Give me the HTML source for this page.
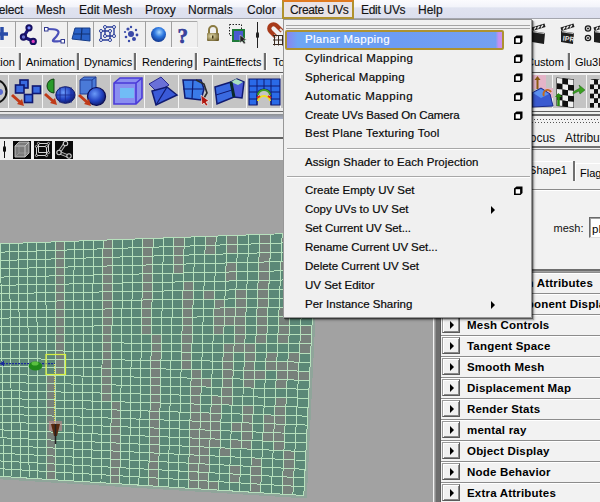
<!DOCTYPE html>
<html><head><meta charset="utf-8">
<style>
*{margin:0;padding:0;box-sizing:border-box}
html,body{width:600px;height:502px;overflow:hidden;background:#f0f0f0;font-family:"Liberation Sans",sans-serif;position:relative}
.a{position:absolute}
svg{position:absolute;overflow:visible}
#menubar{left:0;top:0;width:600px;height:19px;background:linear-gradient(#fbfbfe 0,#f3f4fa 6.5px,#e0e3f0 8px,#dcdfee 18px,#a4a6ae 18px)}
#menubar span{position:absolute;top:3px;font-size:12px;color:#111;-webkit-text-stroke:0.15px #222;white-space:nowrap}
#tb1{left:0;top:19px;width:600px;height:29px;background:#f0f0f0;border-top:1px solid #f6f6f6}
.vl{position:absolute;width:1px;background:#a0a0a0}
.hl{position:absolute;height:1px;background:#a0a0a0}
#tabs{left:0;top:48px;width:600px;height:25px;background:#f0f0f0;border-bottom:1px solid #5e5e5e}
#tabs span{position:absolute;top:7.5px;font-size:11px;color:#000;white-space:nowrap}
.tsep{position:absolute;top:5px;width:4px;height:17px;background:#6e6e6e;border-left:1px solid #d6d6d6;border-right:1px solid #fff}
#shelf{left:0;top:73px;width:600px;height:38px;background:#f0f0f0}
#shelf .bg{position:absolute;top:2px;height:33px;background:#c4c4c4}
.ssep{position:absolute;top:2px;width:1px;height:33px;background:#f4f4f4}
#bar2{left:0;top:111px;width:600px;height:8px;background:linear-gradient(#6c6c6c 0,#6c6c6c 1px,#e6e6e6 1px,#e6e6e6 3px,#8e9194 3px,#a7aec4 8px)}
#bar3{left:0;top:119px;width:441px;height:20px;background:#efefef;border-bottom:2px solid #616161}
#ptb{left:0;top:139px;width:433px;height:21px;background:#f0f0f0}
#vp{left:0;top:160px;width:433px;height:342px;background:#a2a2a2;overflow:hidden}
#vdiv{left:433px;top:139px;width:8px;height:363px;background:linear-gradient(90deg,#f4f4f4 0 1px,#acacac 1px 2px,#8c8c8c 2px 3px,#6e6e6e 3px 7px,#5a5a5a 7px 8px)}
#ae{left:441px;top:111px;width:159px;height:391px;background:linear-gradient(#5e5e5e 0,#5e5e5e 1px,#eef0ee 1px,#eef0ee 3px,#6a6a6a 3px,#6a6a6a 4.5px,#f2f2f2 4.5px)}
#menu{left:283px;top:19px;width:249px;height:299px;background:#f0f0f0;border:1px solid #979797;box-shadow:1px 1px 0 rgba(0,0,0,.45),2px 2px 1px rgba(0,0,0,.25),3px 3px 2px rgba(0,0,0,.12)}
#menu .it{position:absolute;left:21px;font-size:11.5px;color:#000;-webkit-text-stroke:0.2px #222;white-space:nowrap}
#menu .sep{position:absolute;left:3px;width:243px;height:2px;border-top:1px solid #a8a8a8;border-bottom:1px solid #fff}
.arr{position:absolute;width:0;height:0;border-top:4px solid transparent;border-bottom:4px solid transparent;border-left:4.5px solid #000}
.row{position:absolute;left:0;width:159px;height:21px;border-top:1px solid #8c8c8c;box-shadow:inset 0 1px 0 #fff}
.row .b{position:absolute;left:1px;top:1px;width:18px;height:17px;background:#f0f0f0;border:1px solid;border-color:#9a9a9a #5a5a5a #5a5a5a #9a9a9a;box-shadow:inset 1px 1px 0 #fff,inset -1px -1px 0 #8a8a8a}
.row .b:after{content:"";position:absolute;left:7px;top:4px;border-top:4px solid transparent;border-bottom:4px solid transparent;border-left:4px solid #000}
.row span{position:absolute;left:26px;top:4px;font-size:11.5px;letter-spacing:0.2px;font-weight:bold;color:#000;white-space:nowrap}
</style></head><body>
<!-- MENUBAR -->
<div id="menubar" class="a">
<span style="left:-9px;letter-spacing:-0.2px">Select</span>
<span style="left:36px">Mesh</span>
<span style="left:79px">Edit Mesh</span>
<span style="left:145px">Proxy</span>
<span style="left:188px">Normals</span>
<span style="left:247px">Color</span>
<span style="left:361px;letter-spacing:-0.3px">Edit UVs</span>
<span style="left:418px">Help</span>
</div>
<!-- TOOLBAR 1 -->
<div id="tb1" class="a">
<div class="hl" style="left:0;top:1px;width:198px;background:#a8a8a8"></div>
<div class="hl" style="left:0;top:27px;width:198px;background:#fafafa"></div>
<div class="vl" style="left:15px;top:1px;height:26px"></div>
<div class="vl" style="left:41px;top:1px;height:26px"></div>
<div class="vl" style="left:67px;top:1px;height:26px"></div>
<div class="vl" style="left:93px;top:1px;height:26px"></div>
<div class="vl" style="left:119px;top:1px;height:26px"></div>
<div class="vl" style="left:145px;top:1px;height:26px"></div>
<div class="vl" style="left:171px;top:1px;height:26px"></div>
<div class="vl" style="left:197px;top:1px;height:26px;background:#d8d8d8"></div>
<svg width="600" height="29" style="left:0;top:0">
 <!-- plus -->
 <path d="M-3 14h11M2 7v13" stroke="#2a4ca8" stroke-width="3.5"/>
 <!-- joints -->
 <path d="M29 8L23.5 17L33 21" stroke="#1a1278" stroke-width="3.2" fill="none" stroke-linejoin="round"/>
 <circle cx="29" cy="7.8" r="2.6" fill="#7a8aff" stroke="#140e60" stroke-width="2"/>
 <circle cx="23.5" cy="17" r="2.7" fill="#6a70d0" stroke="#140e60" stroke-width="2"/>
 <circle cx="33.2" cy="21.4" r="2.7" fill="#e040c0" stroke="#140e60" stroke-width="2"/>
 <!-- curve -->
 <path d="M47 9C56 9 60 10 58 14C56 18 52 20 53 21C55 22 59 21 62 21" stroke="#4a50b8" stroke-width="2.2" fill="none"/>
 <rect x="44.5" y="7.5" width="3.5" height="3.5" fill="#fff" stroke="#303890" stroke-width="1"/>
 <rect x="61" y="19.5" width="3.5" height="3.5" fill="#fff" stroke="#303890" stroke-width="1"/>
 <!-- poly plane -->
 <path d="M75 8L90 8L90 21L72 19Z" fill="#2a62c8" stroke="#163c88" stroke-width="1"/>
 <path d="M82 8L81 20M74 14L90 14" stroke="#123070" stroke-width="1.2"/>
 <!-- lattice -->
 <path d="M101 11h9v9h-9zM105 7h9v9h-9z" fill="none" stroke="#283c98" stroke-width="1.4"/>
 <g fill="#fff" stroke="#283c98" stroke-width="1"><circle cx="101" cy="11" r="1.5"/><circle cx="110" cy="11" r="1.5"/><circle cx="101" cy="20" r="1.5"/><circle cx="110" cy="20" r="1.5"/><circle cx="105" cy="7" r="1.5"/><circle cx="114" cy="7" r="1.5"/><circle cx="114" cy="16" r="1.5"/><circle cx="105" cy="16" r="1.5"/></g>
 <!-- particles -->
 <defs><filter id="blr" x="-50%" y="-50%" width="200%" height="200%"><feGaussianBlur stdDeviation=".7"/></filter></defs>
 <g fill="#3a4aa8" filter="url(#blr)"><circle cx="131" cy="14" r="3"/><circle cx="128" cy="9" r="1.6"/><circle cx="134" cy="19" r="2"/><circle cx="126" cy="17" r="1.3"/><circle cx="136" cy="10" r="1.2"/><circle cx="131" cy="7" r="1.2"/><circle cx="129" cy="21" r="1.2"/><circle cx="137" cy="15" r="1.4"/><circle cx="125" cy="12" r="1.1"/></g>
 <!-- sphere -->
 <defs><radialGradient id="sg" cx=".55" cy=".35" r=".7"><stop offset="0" stop-color="#a8d8ff"/><stop offset=".45" stop-color="#2e78e0"/><stop offset="1" stop-color="#0a2a80"/></radialGradient>
 <radialGradient id="lk" cx=".4" cy=".4" r=".7"><stop offset="0" stop-color="#e8e0b0"/><stop offset="1" stop-color="#6a5a28"/></radialGradient></defs>
 <circle cx="158.5" cy="14.5" r="7.5" fill="url(#sg)"/>
 <!-- ? -->
 <text x="177.5" y="23" font-family="Liberation Serif" font-weight="bold" font-size="21" fill="#3a44a0" stroke="#2a3490" stroke-width=".6">?</text>
 <!-- lock -->
 <path d="M209 13v-3a4 4 0 0 1 8 0v3" stroke="#8a7a40" stroke-width="2" fill="none"/>
 <rect x="207" y="13" width="12" height="8" rx="1" fill="url(#lk)"/>
 <rect x="212" y="15.5" width="1.5" height="3" fill="#3a3010"/>
 <!-- select -->
 <rect x="229.5" y="4.5" width="12" height="11" fill="none" stroke="#222" stroke-width="1" stroke-dasharray="1.5 1.5"/>
 <rect x="232" y="9" width="13" height="13" fill="#1f7a3a"/>
 <rect x="234" y="11" width="9" height="9" fill="#4a5ad0"/>
 <path d="M240 15l0 8l2-2l2 3l1.5-1l-2-3l3 0z" fill="#222" stroke="#ddd" stroke-width=".5"/>
 <!-- separator -->
 <path d="M257.5 2v26" stroke="#222" stroke-width="1"/>
 <rect x="256" y="12" width="3" height="6" rx="1.5" fill="#222"/>
 <!-- magnet -->
 <path d="M276 17L270.5 11.5a4.2 4.2 0 0 1 6-6L282 11" stroke="#a83a1a" stroke-width="4.2" fill="none"/>
 <path d="M276 17l-2-2M282 11l-2-2" stroke="#e8e0d8" stroke-width="2"/>
 <path d="M273 15.5h11M273 20h11M273 24.5h11M274.5 15v10.5M278.5 15v10.5M282.5 15v10.5" stroke="#3a2a20" stroke-width="1"/>
</svg>
<!-- right side clapboards -->
<svg width="70" height="29" style="left:530px;top:0" viewBox="530 20 70 29">
 <defs><g id="clap"><path d="M0 7L13 9L12 20L0 18Z" fill="#1e1e1e"/><path d="M-0.5 3.5L12.5 -0.5L13.5 3L0.5 7Z" fill="#1e1e1e"/><path d="M2 5.5l2-2.5M5.5 4.5l2-2.5M9 3.5l2-2.5" stroke="#e8e8e8" stroke-width="1.3"/><path d="M1 7.8L12.5 9.6" stroke="#e8e8e8" stroke-width=".8"/></g></defs>
 <use href="#clap" x="532" y="24"/>
 <use href="#clap" x="561" y="24"/>
 <text x="563" y="41" font-size="7" font-weight="bold" fill="#e8e8e8" transform="rotate(8 567 38)">IPR</text>
 <circle cx="588" cy="28.5" r="2.6" fill="none" stroke="#1a1a1a" stroke-width="1.4"/><circle cx="588" cy="28.5" r="1" fill="#1a1a1a"/>
 <circle cx="588" cy="38" r="2.6" fill="none" stroke="#1a1a1a" stroke-width="1.4"/><circle cx="588" cy="38" r="1" fill="#1a1a1a"/>
 <use href="#clap" x="594" y="24"/>
</svg>
</div>
<!-- SHELF TABS -->
<div id="tabs" class="a">
<span style="left:-45px">Deformation</span>
<div class="tsep" style="left:18px"></div>
<span style="left:26px">Animation</span>
<div class="tsep" style="left:76px"></div>
<span style="left:84px">Dynamics</span>
<div class="tsep" style="left:133px"></div>
<span style="left:142px">Rendering</span>
<div class="tsep" style="left:194px"></div>
<span style="left:203px">PaintEffects</span>
<div class="tsep" style="left:263px"></div>
<span style="left:273px">Toon</span>
<span style="left:526px">Custom</span>
<div class="tsep" style="left:567px"></div>
<span style="left:575px">Glu3D</span>
</div>
<!-- SHELF -->
<div id="shelf" class="a">
<div class="bg" style="left:0;width:283px"></div>
<div class="bg" style="left:531px;width:69px"></div>
<div class="ssep" style="left:8px"></div>
<div class="ssep" style="left:42px"></div>
<div class="ssep" style="left:76px"></div>
<div class="ssep" style="left:110px"></div>
<div class="ssep" style="left:144px"></div>
<div class="ssep" style="left:178px"></div>
<div class="ssep" style="left:212px"></div>
<div class="ssep" style="left:246px"></div>
<div class="ssep" style="left:280px"></div>
<div class="ssep" style="left:552px"></div>
<div class="ssep" style="left:586px"></div>
<svg width="600" height="38" style="left:0;top:0" viewBox="0 73 600 38">
<defs>
<linearGradient id="bl" x1="0" y1="0" x2="1" y2="1"><stop offset="0" stop-color="#5a8cf0"/><stop offset="1" stop-color="#2a48c0"/></linearGradient>
<radialGradient id="bs" cx=".4" cy=".35" r=".7"><stop offset="0" stop-color="#6a9af8"/><stop offset=".6" stop-color="#2040c0"/><stop offset="1" stop-color="#101860"/></radialGradient>
<g id="rarr"><path d="M0 0L9 8" stroke="#c03a18" stroke-width="3"/><path d="M5 9L12 11L10 4Z" fill="#c03a18"/></g>
</defs>
<!-- icon0 -->
<circle cx="-5" cy="91.5" r="11.5" fill="#c8c8c8" stroke="#111" stroke-width="2"/><ellipse cx="-1" cy="92" rx="4" ry="3" fill="#5a6ad0"/>
<!-- icon1 -->
<g fill="#3a6ae0" stroke="#101870" stroke-width="1.6">
<rect x="20" y="80" width="8" height="8"/><rect x="15.5" y="85" width="8.5" height="8"/><rect x="32.5" y="86" width="8" height="7.5"/><rect x="24.5" y="94.5" width="8" height="8"/>
</g>
<use href="#rarr" x="12" y="95"/>
<!-- icon2 -->
<path d="M54 79A7 7 0 0 0 54 93Z" fill="#2a9a2a" stroke="#104010" stroke-width="1"/>
<ellipse cx="65.4" cy="95" rx="9.6" ry="8.3" fill="url(#bs)" stroke="#101868" stroke-width="1"/>
<path d="M60 87v16M65.4 86.7v16.6M71 87v16M56 95h19" stroke="#1a2a90" stroke-width=".8"/>
<use href="#rarr" x="45" y="94"/>
<!-- icon3 -->
<path d="M80 80l4-3h12v14l-4 3h-12z" fill="#4a7ad8" stroke="#203a90" stroke-width="1"/>
<path d="M80 80h12v14M92 80l4-3" stroke="#203a90" stroke-width="1" fill="none"/>
<circle cx="96.5" cy="96.5" r="9" fill="url(#bs)" stroke="#0a0a50" stroke-width="1.2"/>
<use href="#rarr" x="79" y="95"/>
<!-- icon4 -->
<path d="M114 83l6-5h22v20l-6 6h-22z" fill="#8a8ef0" stroke="#4a3ad8" stroke-width="1.6"/>
<path d="M114 83h22v21M136 83l6-5" stroke="#4a3ad8" stroke-width="1.6" fill="none"/>
<rect x="120" y="88" width="14" height="10" fill="#6ac8f8" opacity=".8"/>
<!-- icon5 -->
<path d="M149 84l12-7l8 8l-12 7z" fill="#6a70d8" stroke="#2a2a90" stroke-width="1"/>
<path d="M152 91l4 14l21-10l-10-8z" fill="#3a5ad8" stroke="#101a70" stroke-width="1.5"/>
<path d="M156 105l11-18" stroke="#101a70" stroke-width="1.2"/>
<!-- icon6 -->
<path d="M183 80h18l3 9l-3 11l-16 -2z" fill="#3a7ae8" stroke="#101a70" stroke-width="1.5"/>
<path d="M193 80l-1 19M183 89h20" stroke="#101a70" stroke-width="1.2"/>
<path d="M196 80l8 4l3 9l-3 5" stroke="#2a2a2a" stroke-width="1.6" fill="none"/>
<path d="M201 95l1 10l2-2l2 3l2-1l-2-3l3-1z" fill="#b01a10" stroke="#fff" stroke-width=".6"/>
<!-- icon7 -->
<path d="M215 87l16-5l3 15l-17 7z" fill="#3a6ae0" stroke="#101a70" stroke-width="1.5"/>
<path d="M231 82l6-3l7 3l-2 16l-8 -1z" fill="#4a5ad8" stroke="#101a70" stroke-width="1.5"/>
<path d="M231 82l5 -3l7 3l-5 3z" fill="#a8e0c0"/>
<path d="M231 82l3 15" stroke="#0a2a2a" stroke-width="3"/>
<path d="M216 95l16-5" stroke="#101a70" stroke-width="1"/>
<!-- icon8 -->
<path d="M249 79h31v26h-9v-10a7 6 0 0 0 -14 0v10h-8z" fill="#2a6ae8" stroke="#101a70" stroke-width="1.2"/>
<path d="M249 86h31M249 92h8M271 92h9M249 99h8M271 99h9M257 79v26M264 79v12M271 79v26" stroke="#101a70" stroke-width="1"/>
<path d="M257 101a7 6 0 0 1 14 0h-2a5 4 0 0 0 -10 0z" fill="#f0e020"/>
<path d="M258 95a6 5 0 0 1 12 0" stroke="#40a020" stroke-width="2" fill="none"/>
<path d="M257 98l3-2M271 98l-3-2" stroke="#e03010" stroke-width="2"/>
<!-- right shelf -->
<rect x="532" y="75" width="14" height="14" fill="#e4b4c8"/>
<rect x="545" y="88" width="8" height="10" fill="#e4b4c8"/>
<path d="M537.5 89v-10" stroke="#8a5a10" stroke-width="2"/><path d="M534.5 80l3-4l3 4z" fill="#8a5a10"/>
<path d="M532 93l9-5l9 6l3 12l-21 1z" fill="#3a5ad0" stroke="#1a2a8a" stroke-width="1"/>
<path d="M533 93l8-4l8 5l-8 4z" fill="#5a90f0"/>
<path d="M544 96a4 4 0 0 1 7 -4" stroke="#c06a20" stroke-width="2" fill="none"/>
<g transform="translate(557,78) skewY(6)"><rect x="-0.5" y="-0.5" width="17.5" height="28.5" fill="#111"/><rect x="0.0" y="0.0" width="5.5" height="5.5" fill="#f0f0f0"/><rect x="5.5" y="0.0" width="5.5" height="5.5" fill="#111"/><rect x="11.0" y="0.0" width="5.5" height="5.5" fill="#f0f0f0"/><rect x="0.0" y="5.5" width="5.5" height="5.5" fill="#111"/><rect x="5.5" y="5.5" width="5.5" height="5.5" fill="#f0f0f0"/><rect x="11.0" y="5.5" width="5.5" height="5.5" fill="#111"/><rect x="0.0" y="11.0" width="5.5" height="5.5" fill="#f0f0f0"/><rect x="5.5" y="11.0" width="5.5" height="5.5" fill="#111"/><rect x="11.0" y="11.0" width="5.5" height="5.5" fill="#f0f0f0"/><rect x="0.0" y="16.5" width="5.5" height="5.5" fill="#111"/><rect x="5.5" y="16.5" width="5.5" height="5.5" fill="#f0f0f0"/><rect x="11.0" y="16.5" width="5.5" height="5.5" fill="#111"/><rect x="0.0" y="22.0" width="5.5" height="5.5" fill="#f0f0f0"/><rect x="5.5" y="22.0" width="5.5" height="5.5" fill="#111"/><rect x="11.0" y="22.0" width="5.5" height="5.5" fill="#f0f0f0"/></g>
<path d="M573 92l7-4l-1-3l6 5l-5 4l-1-3l-6 3z" fill="#3aa020" stroke="#1a6010" stroke-width=".5"/>
<path d="M558.5 106v-11" stroke="#2a8a10" stroke-width="2.5"/><path d="M555 97l3.5-4l3.5 4z" fill="#2a8a10"/>
<g transform="translate(590,79)"><path d="M0 2a5 2 0 0 1 10 0v24a5 2 0 0 1 -10 0z" fill="#111"/><g transform="translate(0,1)"><rect x="0.0" y="0.0" width="4" height="4.6" fill="#e8e8e8"/><rect x="4.0" y="0.0" width="4" height="4.6" fill="#111"/><rect x="8.0" y="0.0" width="4" height="4.6" fill="#e8e8e8"/><rect x="0.0" y="4.6" width="4" height="4.6" fill="#111"/><rect x="4.0" y="4.6" width="4" height="4.6" fill="#e8e8e8"/><rect x="8.0" y="4.6" width="4" height="4.6" fill="#111"/><rect x="0.0" y="9.2" width="4" height="4.6" fill="#e8e8e8"/><rect x="4.0" y="9.2" width="4" height="4.6" fill="#111"/><rect x="8.0" y="9.2" width="4" height="4.6" fill="#e8e8e8"/><rect x="0.0" y="13.8" width="4" height="4.6" fill="#111"/><rect x="4.0" y="13.8" width="4" height="4.6" fill="#e8e8e8"/><rect x="8.0" y="13.8" width="4" height="4.6" fill="#111"/><rect x="0.0" y="18.4" width="4" height="4.6" fill="#e8e8e8"/><rect x="4.0" y="18.4" width="4" height="4.6" fill="#111"/><rect x="8.0" y="18.4" width="4" height="4.6" fill="#e8e8e8"/><rect x="0.0" y="23.0" width="4" height="4.6" fill="#111"/><rect x="4.0" y="23.0" width="4" height="4.6" fill="#e8e8e8"/><rect x="8.0" y="23.0" width="4" height="4.6" fill="#111"/></g></g>
</svg>
</div>
<div id="bar2" class="a"></div>
<div id="bar3" class="a"></div>
<div id="ptb" class="a">
<svg width="433" height="21" style="left:0;top:0" viewBox="0 139 433 21">
<path d="M4.5 141v17" stroke="#111" stroke-width="1"/><rect x="3" y="146" width="3" height="6" rx="1.5" fill="#111"/>
<rect x="13" y="141" width="18" height="18" fill="#0a0a0a"/>
<rect x="34" y="141" width="18" height="18" fill="#0a0a0a"/>
<rect x="55" y="141" width="18" height="18" fill="#0a0a0a"/>
<path d="M15 146l4-4h10v11l-4 4h-10z" fill="#7c7c7c"/>
<path d="M15 146h10v11M25 146l4-4M15 146l4-4h10v11l-4 4h-10z" stroke="#c8c8c8" stroke-width=".9" fill="none"/>
<path d="M19 142v11h10M19 153l-4 4" stroke="#a8a8a8" stroke-width=".6" fill="none"/>
<path d="M36.5 146.5h10v9h-10zM38.5 143.5h10v9h-10z" stroke="#d0d0d0" stroke-width="1" fill="none"/>
<g fill="#0a0a0a" stroke="#d8d8d8" stroke-width=".8"><circle cx="36.5" cy="146.5" r="1.1"/><circle cx="46.5" cy="146.5" r="1.1"/><circle cx="36.5" cy="155.5" r="1.1"/><circle cx="46.5" cy="155.5" r="1.1"/><circle cx="38.5" cy="143.5" r="1.1"/><circle cx="48.5" cy="143.5" r="1.1"/><circle cx="48.5" cy="152.5" r="1.1"/></g>
<path d="M65 143.5l-6 9l10 4" stroke="#bbb" stroke-width="3.4" fill="none" stroke-linecap="round" stroke-linejoin="round"/>
<path d="M65 143.5l-6 9l10 4" stroke="#222" stroke-width="1.4" fill="none" stroke-linecap="round" stroke-linejoin="round"/>
<circle cx="65.5" cy="143.5" r="2.2" fill="#111" stroke="#ccc" stroke-width="1.1"/>
<circle cx="59" cy="152.5" r="2.2" fill="#111" stroke="#ccc" stroke-width="1.1"/>
<circle cx="69" cy="156" r="2.2" fill="#111" stroke="#ccc" stroke-width="1.1"/>
</svg>
</div>
<div id="vp" class="a">
<svg width="433" height="342" style="left:0;top:0" shape-rendering="crispEdges">
<path d="M316.5 72.5 L319.5 72.5 L306.8 337.5 L303.8 335.5 Z M-10.0 315.7 L306.8 335.5 L306.8 338.5 L-10.0 318.7 Z" fill="#8fa59a"/>
<path d="M-10.0 84.2 L316.5 72.5 L303.8 335.5 L-10.0 315.7 Z" fill="#5b8877"/>
<path d="M46.3 215.2 55.3 215.3 55.3 223.5 46.3 223.3ZM46.3 223.3 55.3 223.5 55.3 231.6 46.3 231.3ZM46.3 231.3 55.3 231.6 55.4 239.6 46.3 239.4ZM46.3 239.4 55.4 239.6 55.4 247.7 46.4 247.4ZM46.4 247.4 55.4 247.7 55.4 255.7 46.4 255.4ZM46.4 255.4 55.4 255.7 55.4 263.7 46.4 263.4ZM46.4 263.4 55.4 263.7 55.4 271.7 46.4 271.3ZM46.4 271.3 55.4 271.7 55.4 279.7 46.5 279.3ZM46.5 279.3 55.4 279.7 55.4 287.6 46.5 287.2ZM46.5 287.2 55.4 287.6 55.4 295.5 46.5 295.1ZM46.5 295.1 55.4 295.5 55.4 303.4 46.5 302.9ZM46.5 302.9 55.4 303.4 55.4 311.3 46.6 310.8ZM46.6 310.8 55.4 311.3 55.4 319.1 46.6 318.6ZM55.2 82.2 64.6 81.8 64.6 90.3 55.2 90.7ZM55.2 90.7 64.6 90.3 64.6 98.9 55.2 99.1ZM55.2 99.1 64.6 98.9 64.6 107.3 55.2 107.6ZM55.2 107.6 64.6 107.3 64.5 115.8 55.2 116.0ZM55.2 116.0 64.5 115.8 64.5 124.2 55.2 124.4ZM55.2 124.4 64.5 124.2 64.5 132.7 55.2 132.8ZM55.2 132.8 64.5 132.7 64.5 141.0 55.2 141.2ZM55.2 141.2 64.5 141.0 64.5 149.4 55.2 149.5ZM55.2 149.5 64.5 149.4 64.5 157.8 55.3 157.8ZM55.3 157.8 64.5 157.8 64.5 166.1 55.3 166.1ZM55.3 166.1 64.5 166.1 64.5 174.4 55.3 174.4ZM55.3 174.4 64.5 174.4 64.5 182.7 55.3 182.6ZM55.3 182.6 64.5 182.7 64.5 190.9 55.3 190.8ZM55.3 190.8 64.5 190.9 64.5 199.1 55.3 199.0ZM55.3 199.0 64.5 199.1 64.5 207.3 55.3 207.2ZM55.3 207.2 64.5 207.3 64.5 215.5 55.3 215.3ZM103.1 80.4 112.9 80.0 112.8 88.7 103.0 89.1ZM103.0 89.1 112.8 88.7 112.8 97.4 102.9 97.7ZM102.9 97.7 112.8 97.4 112.7 106.1 102.9 106.3ZM102.9 106.3 112.7 106.1 112.6 114.7 102.8 114.9ZM102.8 114.9 112.6 114.7 112.5 123.3 102.7 123.5ZM102.7 123.5 112.5 123.3 112.4 131.9 102.6 132.0ZM102.6 132.0 112.4 131.9 112.3 140.5 102.6 140.6ZM102.6 140.6 112.3 140.5 112.2 149.0 102.5 149.1ZM102.5 149.1 112.2 149.0 112.1 157.5 102.4 157.6ZM102.4 157.6 112.1 157.5 112.0 166.0 102.4 166.0ZM102.4 166.0 112.0 166.0 111.9 174.5 102.3 174.4ZM102.3 174.4 111.9 174.5 111.8 182.9 102.2 182.9ZM102.2 182.9 111.8 182.9 111.8 191.3 102.1 191.2ZM102.1 191.2 111.8 191.3 111.7 199.7 102.1 199.6ZM102.1 199.6 111.7 199.7 111.6 208.1 102.0 207.9ZM102.0 207.9 111.6 208.1 111.5 216.4 101.9 216.2ZM101.9 216.2 111.5 216.4 111.4 224.8 101.8 224.5ZM101.8 224.5 111.4 224.8 111.3 233.1 101.8 232.8ZM101.8 232.8 111.3 233.1 111.2 241.3 101.7 241.0ZM111.2 241.3 120.8 241.6 120.7 249.9 111.1 249.6ZM111.1 249.6 120.7 249.9 120.6 258.2 111.1 257.8ZM111.1 257.8 120.6 258.2 120.5 266.4 111.0 266.0ZM111.0 266.0 120.5 266.4 120.4 274.6 110.9 274.2ZM110.9 274.2 120.4 274.6 120.3 282.8 110.8 282.3ZM110.8 282.3 120.3 282.8 120.2 291.0 110.7 290.5ZM110.7 290.5 120.2 291.0 120.1 299.1 110.6 298.6ZM110.6 298.6 120.1 299.1 120.0 307.2 110.5 306.7ZM110.5 306.7 120.0 307.2 119.9 315.3 110.4 314.7ZM110.4 314.7 119.9 315.3 119.8 323.4 110.4 322.8ZM143.0 78.9 153.2 78.5 153.0 87.4 142.8 87.7ZM142.8 87.7 153.0 87.4 152.9 96.2 142.7 96.5ZM142.7 96.5 152.9 96.2 152.7 105.0 142.6 105.3ZM142.6 105.3 152.7 105.0 152.5 113.8 142.4 114.0ZM142.4 114.0 152.5 113.8 152.4 122.5 142.3 122.7ZM142.3 122.7 152.4 122.5 152.2 131.3 142.1 131.4ZM142.1 131.4 152.2 131.3 152.0 140.0 142.0 140.1ZM142.0 140.1 152.0 140.0 151.9 148.6 141.8 148.7ZM141.8 148.7 151.9 148.6 151.7 157.3 141.7 157.3ZM141.7 157.3 151.7 157.3 151.6 165.9 141.6 165.9ZM141.6 165.9 151.6 165.9 151.4 174.5 141.4 174.5ZM151.4 174.5 161.5 174.5 161.3 183.2 151.2 183.1ZM151.2 183.1 161.3 183.2 161.1 191.8 151.1 191.7ZM151.1 191.7 161.1 191.8 161.0 200.3 150.9 200.2ZM150.9 200.2 161.0 200.3 160.8 208.9 150.8 208.7ZM150.8 208.7 160.8 208.9 160.6 217.4 150.6 217.2ZM150.6 217.2 160.6 217.4 160.4 225.9 150.5 225.7ZM150.5 225.7 160.4 225.9 160.3 234.4 150.3 234.1ZM150.3 234.1 160.3 234.4 160.1 242.8 150.1 242.5ZM150.1 242.5 160.1 242.8 159.9 251.2 150.0 250.9ZM150.0 250.9 159.9 251.2 159.7 259.6 149.8 259.3ZM149.8 259.3 159.7 259.6 159.6 268.0 149.7 267.6ZM149.7 267.6 159.6 268.0 159.4 276.3 149.5 275.9ZM149.5 275.9 159.4 276.3 159.2 284.7 149.4 284.2ZM149.4 284.2 159.2 284.7 159.1 293.0 149.2 292.5ZM149.2 292.5 159.1 293.0 158.9 301.2 149.1 300.7ZM149.1 300.7 158.9 301.2 158.7 309.5 148.9 308.9ZM148.9 308.9 158.7 309.5 158.6 317.7 148.8 317.1ZM148.8 317.1 158.6 317.7 158.4 325.9 148.6 325.3ZM173.8 77.8 184.3 77.4 184.1 86.3 173.6 86.7ZM173.6 86.7 184.1 86.3 183.8 95.3 173.4 95.6ZM173.4 95.6 183.8 95.3 183.6 104.2 173.2 104.5ZM173.2 104.5 183.6 104.2 183.4 113.1 173.0 113.3ZM183.2 121.9 193.6 121.7 193.4 130.6 183.0 130.8ZM183.0 130.8 193.4 130.6 193.2 139.5 182.8 139.6ZM182.8 139.6 193.2 139.5 192.9 148.3 182.5 148.4ZM182.5 148.4 192.9 148.3 192.7 157.1 182.3 157.1ZM182.3 157.1 192.7 157.1 192.5 165.9 182.1 165.9ZM182.1 165.9 192.5 165.9 192.2 174.6 181.9 174.6ZM181.9 174.6 192.2 174.6 192.0 183.3 181.7 183.3ZM181.7 183.3 192.0 183.3 191.8 192.0 181.5 191.9ZM181.5 191.9 191.8 192.0 191.5 200.7 181.3 200.6ZM181.3 200.6 191.5 200.7 191.3 209.4 181.1 209.2ZM191.3 209.4 201.7 209.5 201.4 218.2 191.1 218.0ZM191.1 218.0 201.4 218.2 201.2 226.8 190.9 226.6ZM190.9 226.6 201.2 226.8 200.9 235.4 190.6 235.2ZM190.6 235.2 200.9 235.4 200.7 244.0 190.4 243.7ZM190.4 243.7 200.7 244.0 200.4 252.6 190.2 252.2ZM190.2 252.2 200.4 252.6 200.2 261.1 190.0 260.7ZM190.0 260.7 200.2 261.1 200.0 269.6 189.7 269.2ZM189.7 269.2 200.0 269.6 199.7 278.1 189.5 277.7ZM189.5 277.7 199.7 278.1 199.5 286.6 189.3 286.1ZM189.3 286.1 199.5 286.6 199.2 295.0 189.1 294.5ZM189.1 294.5 199.2 295.0 199.0 303.4 188.8 302.9ZM188.8 302.9 199.0 303.4 198.8 311.8 188.6 311.2ZM188.6 311.2 198.8 311.8 198.5 320.2 188.4 319.6ZM188.4 319.6 198.5 320.2 198.3 328.5 188.2 327.9ZM205.4 76.6 216.2 76.2 215.9 85.3 205.2 85.6ZM205.2 85.6 215.9 85.3 215.6 94.3 204.9 94.6ZM203.9 130.4 214.5 130.3 214.2 139.2 203.7 139.3ZM201.4 218.2 211.8 218.4 211.6 227.1 201.2 226.8ZM200.4 252.6 210.8 252.9 210.5 261.5 200.2 261.1ZM200.2 261.1 210.5 261.5 210.3 270.1 200.0 269.6ZM200.0 269.6 210.3 270.1 210.0 278.6 199.7 278.1ZM199.7 278.1 210.0 278.6 209.7 287.1 199.5 286.6ZM199.5 286.6 209.7 287.1 209.5 295.6 199.2 295.0ZM199.2 295.0 209.5 295.6 209.2 304.0 199.0 303.4ZM199.0 303.4 209.2 304.0 209.0 312.4 198.8 311.8ZM198.8 311.8 209.0 312.4 208.7 320.8 198.5 320.2ZM198.5 320.2 208.7 320.8 208.5 329.2 198.3 328.5ZM214.2 139.2 224.9 139.1 224.6 148.0 214.0 148.1ZM214.0 148.1 224.6 148.0 224.3 156.9 213.7 157.0ZM213.7 157.0 224.3 156.9 224.0 165.8 213.4 165.8ZM213.4 165.8 224.0 165.8 223.8 174.7 213.2 174.6ZM211.3 235.7 221.8 236.0 221.5 244.7 211.0 244.3ZM211.0 244.3 221.5 244.7 221.2 253.3 210.8 252.9ZM210.8 252.9 221.2 253.3 220.9 261.9 210.5 261.5ZM210.5 261.5 220.9 261.9 220.7 270.5 210.3 270.1ZM210.3 270.1 220.7 270.5 220.4 279.0 210.0 278.6ZM210.0 278.6 220.4 279.0 220.1 287.6 209.7 287.1ZM208.7 320.8 219.0 321.5 218.7 329.9 208.5 329.2ZM227.0 75.8 237.8 75.4 237.5 84.5 226.7 84.9ZM226.7 84.9 237.5 84.5 237.2 93.7 226.4 94.0ZM226.1 103.1 236.9 102.8 236.6 111.8 225.8 112.1ZM225.8 112.1 236.6 111.8 236.3 120.9 225.5 121.1ZM224.6 148.0 235.4 147.9 235.0 156.8 224.3 156.9ZM224.3 156.9 235.0 156.8 234.7 165.8 224.0 165.8ZM223.5 183.5 234.1 183.5 233.8 192.4 223.2 192.3ZM223.2 192.3 233.8 192.4 233.5 201.2 222.9 201.1ZM222.9 201.1 233.5 201.2 233.2 210.0 222.6 209.9ZM222.6 209.9 233.2 210.0 232.9 218.8 222.3 218.6ZM222.3 218.6 232.9 218.8 232.6 227.5 222.1 227.3ZM222.1 227.3 232.6 227.5 232.3 236.3 221.8 236.0ZM221.8 236.0 232.3 236.3 232.0 245.0 221.5 244.7ZM220.1 287.6 230.5 288.1 230.2 296.6 219.8 296.1ZM236.0 129.9 246.8 129.8 246.5 138.8 235.7 138.9ZM235.7 138.9 246.5 138.8 246.2 147.8 235.4 147.9ZM235.4 147.9 246.2 147.8 245.8 156.8 235.0 156.8ZM235.0 156.8 245.8 156.8 245.5 165.8 234.7 165.8ZM234.7 165.8 245.5 165.8 245.2 174.7 234.4 174.7ZM234.4 174.7 245.2 174.7 244.9 183.6 234.1 183.5ZM234.1 183.5 244.9 183.6 244.5 192.5 233.8 192.4ZM231.4 262.3 242.0 262.7 241.7 271.3 231.1 270.9ZM230.8 279.5 241.4 280.0 241.1 288.6 230.5 288.1ZM229.9 305.2 240.4 305.7 240.1 314.3 229.7 313.7ZM229.7 313.7 240.1 314.3 239.8 322.8 229.4 322.1ZM244.9 183.6 255.7 183.7 255.4 192.6 244.5 192.5ZM244.5 192.5 255.4 192.6 255.0 201.5 244.2 201.4ZM244.2 201.4 255.0 201.5 254.7 210.4 243.9 210.2ZM243.9 210.2 254.7 210.4 254.3 219.2 243.6 219.0ZM243.6 219.0 254.3 219.2 254.0 228.0 243.3 227.8ZM242.6 245.3 253.3 245.6 253.0 254.4 242.3 254.0ZM242.3 254.0 253.0 254.4 252.7 263.1 242.0 262.7ZM242.0 262.7 252.7 263.1 252.3 271.8 241.7 271.3ZM241.7 271.3 252.3 271.8 252.0 280.4 241.4 280.0ZM241.4 280.0 252.0 280.4 251.7 289.1 241.1 288.6ZM259.9 74.6 271.0 74.2 270.6 83.4 259.5 83.8ZM259.5 83.8 270.6 83.4 270.3 92.7 259.2 93.0ZM259.2 93.0 270.3 92.7 269.9 101.9 258.8 102.2ZM258.8 102.2 269.9 101.9 269.5 111.1 258.5 111.3ZM258.5 111.3 269.5 111.1 269.2 120.3 258.1 120.5ZM258.1 120.5 269.2 120.3 268.8 129.4 257.8 129.6ZM257.8 129.6 268.8 129.4 268.4 138.5 257.4 138.7ZM257.4 138.7 268.4 138.5 268.1 147.6 257.1 147.7ZM257.1 147.7 268.1 147.6 267.7 156.7 256.7 156.7ZM256.7 156.7 267.7 156.7 267.3 165.7 256.4 165.7ZM256.4 165.7 267.3 165.7 267.0 174.7 256.0 174.7ZM256.0 174.7 267.0 174.7 266.6 183.7 255.7 183.7ZM254.7 210.4 265.5 210.5 265.2 219.4 254.3 219.2ZM251.3 297.7 262.0 298.3 261.6 306.9 251.0 306.3ZM251.0 306.3 261.6 306.9 261.3 315.5 250.7 314.9ZM250.7 314.9 261.3 315.5 261.0 324.1 250.3 323.4ZM250.3 323.4 261.0 324.1 260.6 332.6 250.0 331.9ZM266.2 192.7 277.2 192.8 276.8 201.8 265.9 201.6ZM265.9 201.6 276.8 201.8 276.5 210.7 265.5 210.5ZM263.7 254.7 274.6 255.1 274.2 263.9 263.4 263.5ZM263.4 263.5 274.2 263.9 273.8 272.7 263.0 272.2ZM263.0 272.2 273.8 272.7 273.5 281.4 262.7 280.9ZM282.2 73.7 293.6 73.3 293.2 82.7 281.9 83.1ZM281.1 101.6 292.3 101.3 291.9 110.6 280.7 110.8ZM279.1 147.5 290.3 147.4 289.9 156.6 278.7 156.6ZM278.7 156.6 289.9 156.6 289.5 165.7 278.4 165.7ZM278.4 165.7 289.5 165.7 289.1 174.8 278.0 174.7ZM278.0 174.7 289.1 174.8 288.7 183.8 277.6 183.8ZM276.8 201.8 287.9 201.9 287.5 210.9 276.5 210.7ZM276.5 210.7 287.5 210.9 287.1 219.9 276.1 219.6ZM276.1 219.6 287.1 219.9 286.7 228.8 275.7 228.5ZM275.3 237.4 286.3 237.7 285.9 246.6 275.0 246.3ZM275.0 246.3 285.9 246.6 285.5 255.5 274.6 255.1ZM274.6 255.1 285.5 255.5 285.1 264.3 274.2 263.9ZM274.2 263.9 285.1 264.3 284.7 273.1 273.8 272.7ZM273.8 272.7 284.7 273.1 284.3 281.9 273.5 281.4ZM273.5 281.4 284.3 281.9 284.0 290.6 273.1 290.1ZM288.3 192.9 299.4 193.0 299.0 202.0 287.9 201.9ZM287.9 201.9 299.0 202.0 298.6 211.1 287.5 210.9ZM287.5 210.9 298.6 211.1 298.2 220.1 287.1 219.9ZM284.0 290.6 294.9 291.2 294.5 299.9 283.6 299.4ZM283.6 299.4 294.5 299.9 294.1 308.7 283.2 308.1ZM283.2 308.1 294.1 308.7 293.7 317.4 282.8 316.8ZM282.8 316.8 293.7 317.4 293.3 326.1 282.4 325.4ZM282.4 325.4 293.3 326.1 292.9 334.8 282.0 334.1ZM304.1 91.7 315.6 91.3 315.1 100.7 303.7 101.0ZM303.7 101.0 315.1 100.7 314.7 110.1 303.2 110.3ZM303.2 110.3 314.7 110.1 314.2 119.4 302.8 119.6ZM302.8 119.6 314.2 119.4 313.8 128.7 302.4 128.9ZM302.4 128.9 313.8 128.7 313.3 138.0 302.0 138.1ZM300.7 165.7 312.0 165.6 311.5 174.8 300.3 174.8ZM300.3 174.8 311.5 174.8 311.1 184.0 299.8 183.9ZM299.8 183.9 311.1 184.0 310.7 193.1 299.4 193.0ZM298.6 211.1 309.8 211.2 309.3 220.3 298.2 220.1Z" fill="#77817b"/>
<path d="M0.5 84.2L3.5 315.7M9.4 83.9L12.0 316.3M18.4 83.5L20.5 316.8M27.4 83.2L29.1 317.4M36.6 82.8L37.8 318.0M45.8 82.5L46.6 318.6M55.2 82.2L55.4 319.1M64.6 81.8L64.4 319.7M74.1 81.5L73.4 320.3M83.7 81.1L82.5 320.9M93.3 80.7L91.7 321.5M103.1 80.4L101.0 322.1M112.9 80.0L110.4 322.8M122.9 79.7L119.8 323.4M132.9 79.3L129.3 324.0M143.0 78.9L138.9 324.6M153.2 78.5L148.6 325.3M163.5 78.1L158.4 325.9M173.8 77.8L168.2 326.6M184.3 77.4L178.2 327.2M194.8 77.0L188.2 327.9M205.4 76.6L198.3 328.5M216.2 76.2L208.5 329.2M227.0 75.8L218.7 329.9M237.8 75.4L229.1 330.6M248.8 75.0L239.5 331.3M259.9 74.6L250.0 331.9M271.0 74.2L260.6 332.6M282.2 73.7L271.3 333.3M293.6 73.3L282.0 334.1M305.0 72.9L292.9 334.8M316.5 72.5L303.8 335.5M-10.0 84.2L316.5 72.5M-10.0 92.5L316.0 81.9M-10.0 100.8L315.6 91.3M-10.0 109.0L315.1 100.7M-10.0 117.3L314.7 110.1M-10.0 125.5L314.2 119.4M-10.0 133.7L313.8 128.7M-10.0 141.8L313.3 138.0M-10.0 150.0L312.9 147.2M-10.0 158.1L312.4 156.4M-10.0 166.2L312.0 165.6M-10.0 174.3L311.5 174.8M-10.0 182.3L311.1 184.0M-10.0 190.4L310.7 193.1M-10.0 198.4L310.2 202.2M-10.0 206.3L309.8 211.2M-10.0 214.3L309.3 220.3M-10.0 222.2L308.9 229.3M-10.0 230.2L308.5 238.3M-10.0 238.1L308.0 247.3M-10.0 245.9L307.6 256.2M-10.0 253.8L307.2 265.1M-10.0 261.6L306.8 274.0M-10.0 269.4L306.3 282.9M-10.0 277.2L305.9 291.7M-10.0 284.9L305.5 300.5M-10.0 292.7L305.1 309.3M-10.0 300.4L304.6 318.0M-10.0 308.1L304.2 326.8M-10.0 315.7L303.8 335.5" stroke="#b6e0bc" stroke-width="1" fill="none"/>
</svg>
<svg width="433" height="342" style="left:0;top:0">
<path d="M0 203.6H55" stroke="#1a2a9a" stroke-width="1.2" stroke-dasharray="2 1"/>
<path d="M0 203.6l4-3v6z" fill="#1a2a9a"/>
<ellipse cx="35.5" cy="206" rx="6.8" ry="4.6" fill="#1f8a1a"/>
<ellipse cx="35" cy="203.5" rx="3.5" ry="2" fill="#5ac040"/>
<rect x="46" y="194.5" width="19.5" height="20" fill="none" stroke="#d8f040" stroke-width="1.2"/>
<path d="M54.5 204V264" stroke="#e8e040" stroke-width="1" stroke-dasharray="1 1"/>
<rect x="49" y="261" width="13" height="10" fill="#c08a90" opacity=".6"/>
<path d="M51 264h9l-3 12h-3z" fill="#5a2a10"/>
<path d="M55.5 264v20" stroke="#222" stroke-width="1.5"/>
</svg>
</div>
<div id="vdiv" class="a"></div>
<div id="ae" class="a">
<div class="a" style="left:0;top:8px;width:159px;height:1px;background:repeating-linear-gradient(90deg,#555 0 1px,#f4f4f4 1px 3px)"></div>
<div class="a" style="left:1px;top:11px;width:159px;height:1px;background:repeating-linear-gradient(90deg,#555 0 1px,#f4f4f4 1px 3px)"></div>
<div class="a" style="left:-4px;top:20px;font-size:12px;color:#111;white-space:nowrap;word-spacing:0">List&nbsp;&nbsp;&nbsp;Selected&nbsp;&nbsp;&nbsp;Focus&nbsp;&nbsp;&nbsp;Attributes&nbsp;&nbsp;&nbsp;Help</div>
<div class="a" style="left:0;top:35px;width:159px;height:4px;border-top:2px solid #707070;border-bottom:1px solid #8a8a8a"></div>
<div class="a" style="left:60px;top:50px;width:73px;height:20px;border-left:1px solid #fff;border-top:1px solid #fff"></div>
<div class="a" style="left:132px;top:50px;width:2px;height:20px;background:#707070"></div>
<div class="a" style="left:134px;top:52px;width:30px;height:18px;border-left:1px solid #fff;border-top:1px solid #fff"></div>
<div class="a" style="right:33px;top:53px;font-size:11px;color:#000;white-space:nowrap">pPlaneShape1</div>
<div class="a" style="left:139px;top:56px;font-size:11px;color:#000;white-space:nowrap">Flags</div>
<div class="a" style="left:0;top:78px;width:159px;height:2px;border-top:1px solid #8a8a8a;border-bottom:1px solid #fff"></div>
<div class="a" style="left:112.5px;top:111px;font-size:11px;color:#111;white-space:nowrap">mesh:</div>
<div class="a" style="left:148px;top:106px;width:40px;height:21px;background:#fff;border:1px solid;border-color:#6a6a6a #e0e0e0 #e0e0e0 #6a6a6a;box-shadow:inset 1px 1px 0 #a0a0a0"></div>
<div class="a" style="left:151px;top:112px;font-size:11.5px;color:#000">pPlaneShape1</div>
<div class="a" style="left:0;top:158px;width:159px;height:5px;background:linear-gradient(#6e6e6e 0 2px,#a0a0a0 2px 3px,#fff 3px 4px,#f0f0f0 4px)"></div>
<div class="row" style="top:161px"><div class="b"></div><span style="left:auto;right:7px">Polygon Extrusion Attributes</span></div>
<div class="row" style="top:182px"><div class="b"></div><span>Mesh Component Display</span></div>
<div class="row" style="top:203px"><div class="b"></div><span>Mesh Controls</span></div>
<div class="row" style="top:224px"><div class="b"></div><span>Tangent Space</span></div>
<div class="row" style="top:245px"><div class="b"></div><span>Smooth Mesh</span></div>
<div class="row" style="top:266px"><div class="b"></div><span>Displacement Map</span></div>
<div class="row" style="top:287px"><div class="b"></div><span>Render Stats</span></div>
<div class="row" style="top:308px"><div class="b"></div><span>mental ray</span></div>
<div class="row" style="top:329px"><div class="b"></div><span>Object Display</span></div>
<div class="row" style="top:350px"><div class="b"></div><span>Node Behavior</span></div>
<div class="row" style="top:371px"><div class="b"></div><span>Extra Attributes</span></div>
<div class="row" style="top:392px"><div class="b"></div><span>Notes</span></div>
</div>

<!-- MENU -->
<div id="menu" class="a">
<div class="a" style="left:2px;top:5px;width:244px;height:1px;background:#a4a4a4"></div>
<div class="a" style="left:2px;top:8px;width:244px;height:1px;background:#a4a4a4"></div>
<div class="a" style="left:1px;top:10px;width:219px;height:20px;border:2.5px solid #ad9230;border-radius:2px;background:linear-gradient(90deg,#8a84f0,#6ea6f4 5%,#6c9cf4 50%,#74a0f2 97%,#c890f0 98.5%)"></div>
<div class="sep" style="top:128px"></div>
<div class="sep" style="top:156px"></div>
<svg width="249" height="299" style="left:0;top:0">
 <defs><g id="ob"><path d="M2.5 0.5h6v6.5l-2 2h-6.5v-6.5z" fill="#000"/><rect x="1.7" y="3.2" width="4.4" height="4.4" fill="#fff"/></g></defs>
 <use href="#ob" x="230" y="15"/><use href="#ob" x="230" y="34"/><use href="#ob" x="230" y="53"/><use href="#ob" x="230" y="72"/><use href="#ob" x="230" y="91"/><use href="#ob" x="230" y="166"/>
</svg>
<div class="arr" style="left:207px;top:186px"></div>
<div class="arr" style="left:207px;top:281px"></div>
<div class="it" style="top:13px;color:#fff;-webkit-text-stroke:0.15px #fff;letter-spacing:0.31px">Planar Mapping</div>
<div class="it" style="top:32px;letter-spacing:0.42px">Cylindrical Mapping</div>
<div class="it" style="top:51px;letter-spacing:0.27px">Spherical Mapping</div>
<div class="it" style="top:70px;letter-spacing:0.58px">Automatic Mapping</div>
<div class="it" style="top:89px;letter-spacing:-0.13px">Create UVs Based On Camera</div>
<div class="it" style="top:107px;letter-spacing:0.21px">Best Plane Texturing Tool</div>
<div class="it" style="top:136px;letter-spacing:0.07px">Assign Shader to Each Projection</div>
<div class="it" style="top:164px;letter-spacing:-0.02px">Create Empty UV Set</div>
<div class="it" style="top:183px;letter-spacing:-0.04px">Copy UVs to UV Set</div>
<div class="it" style="top:202px;letter-spacing:-0.10px">Set Current UV Set...</div>
<div class="it" style="top:221px;letter-spacing:-0.07px">Rename Current UV Set...</div>
<div class="it" style="top:240px;letter-spacing:-0.02px">Delete Current UV Set</div>
<div class="it" style="top:259px;letter-spacing:-0.01px">UV Set Editor</div>
<div class="it" style="top:278px;letter-spacing:0.00px">Per Instance Sharing</div>
</div>
<div class="a" style="left:282px;top:0;width:72px;height:19px;border:2.5px solid #b0922e;border-top-color:#e07a20;background:#e9e3e6"></div>
<div class="a" style="left:290px;top:3px;font-size:12px;letter-spacing:-0.35px;color:#111;-webkit-text-stroke:0.15px #222">Create UVs</div>
</body></html>
